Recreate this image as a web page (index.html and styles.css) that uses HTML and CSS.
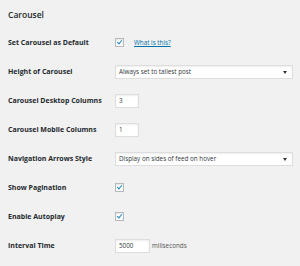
FILE: index.html
```html
<!DOCTYPE html>
<html>
<head>
  <title>Carousel Settings</title>
  <link rel="stylesheet" href="styles.css">
</head>
<body>
  <h2 class="title">Carousel</h2>
  <div class="form-table">
    <div class="label">Set Carousel as Default</div>
    <div class="field">
      <span class="check"></span>
      <a href="#" class="help">What is this?</a>
    </div>

    <div class="label">Height of Carousel</div>
    <div class="field">
      <div class="select">Always set to tallest post<span class="arrow"></span></div>
    </div>

    <div class="label">Carousel Desktop Columns</div>
    <div class="field"><div class="input small">3</div></div>

    <div class="label">Carousel Mobile Columns</div>
    <div class="field"><div class="input small">1</div></div>

    <div class="label">Navigation Arrows Style</div>
    <div class="field">
      <div class="select">Display on sides of feed on hover<span class="arrow"></span></div>
    </div>

    <div class="label">Show Pagination</div>
    <div class="field"><span class="check"></span></div>

    <div class="label">Enable Autoplay</div>
    <div class="field"><span class="check"></span></div>

    <div class="label">Interval Time</div>
    <div class="field">
      <div class="input medium">5000</div>
      <span class="unit">miliseconds</span>
    </div>
  </div>
</body>
</html>
```

FILE: styles.css
```css
body {
  margin: 0;
  padding: 0 8px;
  background-color: #f1f1f1;
  color: #23282d;
  font-family: "Open Sans", "Liberation Sans", sans-serif;
  font-size: 6.3px;
}

.title {
  margin: 0;
  height: 28px;
  line-height: 30px;
  font-size: 8.5px;
  font-weight: 600;
}

.form-table {
  display: grid;
  grid-template-columns: 107px 178px;
  grid-auto-rows: 29px;
  align-items: center;
}

.label {
  font-size: 7px;
  font-weight: 700;
}

.field {
  display: flex;
  align-items: center;
}

/* checkbox with tick */
.check {
  width: 7px;
  height: 7px;
  border: 1px solid #b4b9be;
  background-color: #fff;
  box-shadow: inset 0 1px 2px rgba(0, 0, 0, 0.1);
  position: relative;
}
.check::after {
  content: "";
  position: absolute;
  left: 2px;
  top: 0;
  width: 2px;
  height: 4px;
  border-right: 1.5px solid #1e8cbe;
  border-bottom: 1.5px solid #1e8cbe;
  transform: rotate(40deg);
}

.help {
  margin-left: 10px;
  color: #0073aa;
  text-decoration: underline;
}

.select, .input {
  height: 12px;
  line-height: 12px;
  border: 1px solid #ddd;
  background-color: #fff;
  color: #32373c;
  padding: 0 3px;
  box-shadow: inset 0 1px 2px rgba(0, 0, 0, 0.07);
}

.select {
  position: relative;
  width: 100%;
}
.arrow {
  position: absolute;
  right: 5px;
  top: 5px;
  border-left: 2px solid transparent;
  border-right: 2px solid transparent;
  border-top: 3px solid #32373c;
}

.input.small {
  width: 16px;
}
.input.medium {
  width: 27px;
}

.unit {
  margin-left: 2px;
  color: #555;
}
```
